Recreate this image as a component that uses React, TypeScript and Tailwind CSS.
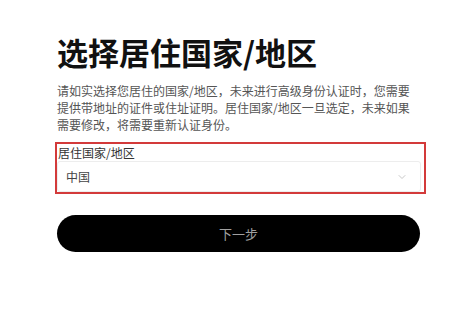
import { ChevronDown } from "lucide-react"

export default function App() {
  return (
    <div
      className="w-[467px] h-[325px] bg-white pl-[57px] pt-[34px]"
      style={{ fontFamily: '"Noto Sans CJK SC", "Noto Sans", sans-serif' }}
    >
      <div className="w-[363px]">
        <h1 className="text-[31px] font-bold leading-[36px] text-[#111]">选择居住国家/地区</h1>
        <p className="mt-[12px] w-[358px] text-[12px] leading-[17px] text-[#555]">
          请如实选择您居住的国家/地区，未来进行高级身份认证时，您需要提供带地址的证件或住址证明。居住国家/地区一旦选定，未来如果需要修改，将需要重新认证身份。
        </p>

        <div className="mt-[9px] -ml-[2px] w-[371px] h-[52px] border-2 border-[#d33a3a] pr-[3px]">
          <div className="pl-[1px] h-[17px] text-[12px] leading-[17px] text-[#333]">居住国家/地区</div>
          <div className="h-[31px] flex items-center justify-between border border-[#ededed] rounded-[3px] pl-[8px] pr-[12px]">
            <span className="text-[12px] text-[#444]">中国</span>
            <ChevronDown className="w-[12px] h-[12px] text-[#b5b5b5]" strokeWidth={1.5} />
          </div>
        </div>

        <button className="mt-[21px] w-full h-[37px] rounded-full bg-black text-[13px] text-[#a0a0a0]">
          下一步
        </button>
      </div>
    </div>
  )
}
